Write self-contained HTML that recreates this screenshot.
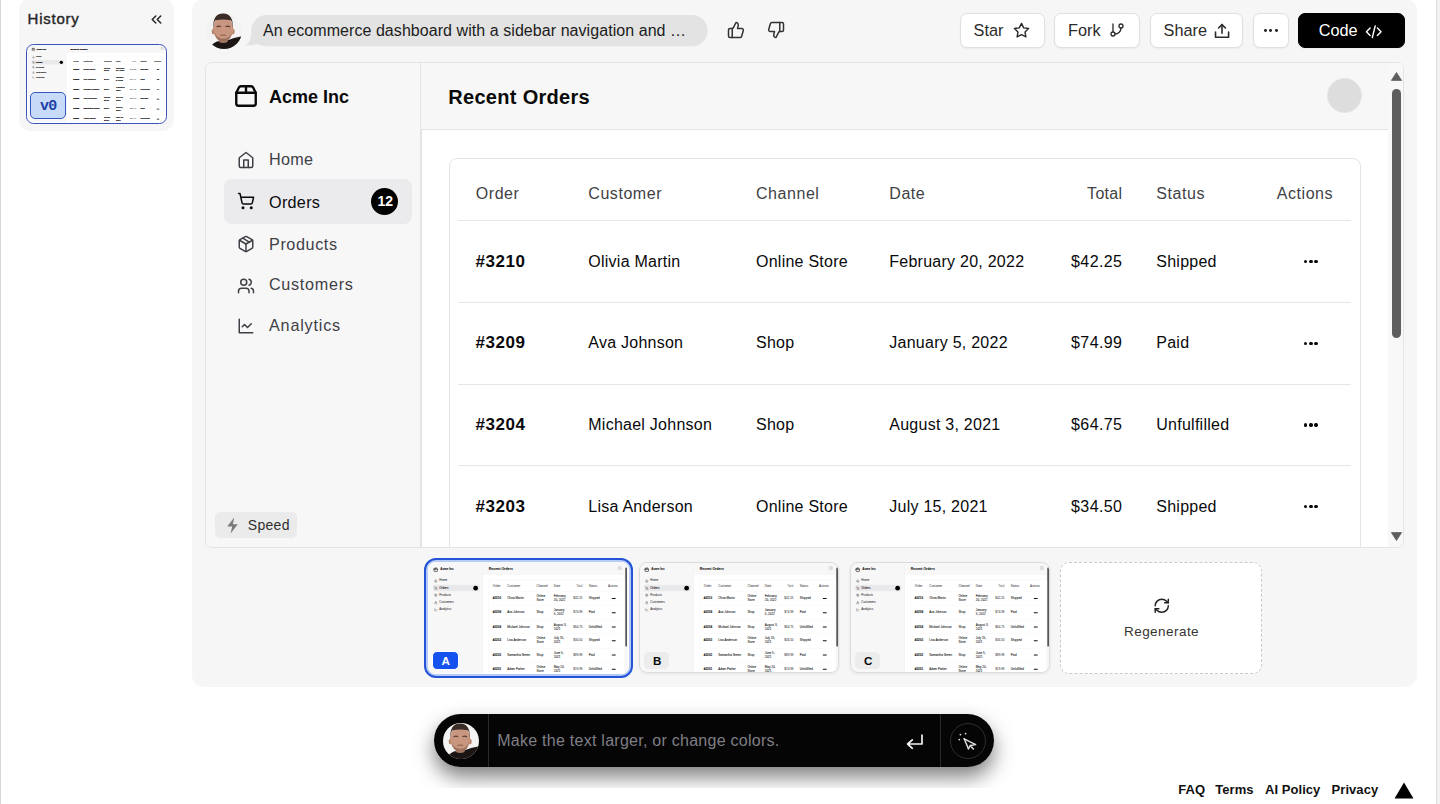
<!DOCTYPE html>
<html><head><meta charset="utf-8">
<style>
*{box-sizing:border-box;margin:0;padding:0}
html,body{width:1440px;height:804px;overflow:hidden;background:#fff;font-family:"Liberation Sans",sans-serif;color:#111}
.a{position:absolute}
.t{position:absolute;white-space:nowrap;line-height:1}
svg{overflow:visible}
</style></head>
<body>
<div class="a" style="left:0;top:0;width:1px;height:804px;background:#d6d6d6"></div>
<div class="a" style="left:1435.5px;top:0;width:4.5px;height:804px;background:#f2f2f2;border-left:1.7px solid #dedede"></div>
<div class="a" style="left:19.00px;top:-2.00px;width:155.00px;height:133.30px;background:#f6f6f6;border-radius:12px"></div>
<div class="t" style="left:27.60px;top:10.70px;font-size:15px;color:#262626;letter-spacing:0.75px;-webkit-text-stroke:0.4px #262626;">History</div>
<svg class="a" style="left:147.65px;top:11.10px;" width="17" height="17" viewBox="0 0 24 24" fill="none" stroke="#2a2a2a" stroke-width="2.2" stroke-linecap="round" stroke-linejoin="round"><path d="m11 17-5-5 5-5"/><path d="m18 17-5-5 5-5"/></svg>
<div class="a" style="left:26.30px;top:43.70px;width:140.50px;height:80.00px;border-radius:7px;background:#fff"></div>
<div class="a" style="left:27.8px;top:43.9px;width:137.5px;height:78.5px;overflow:hidden;border-radius:6px"><div class="a" style="left:0;top:0;width:800px;height:446px;transform:scale(0.175);transform-origin:0 0;background:#fff"><div class="a" style="left:0px;top:0px;width:220px;height:446px;background:#f7f7f8;border-right:1px solid #e6e6e6"></div><svg class="a" style="left:22.00px;top:22.00px;" width="18" height="18" viewBox="0 0 24 24" fill="none" stroke="#111" stroke-width="3" stroke-linecap="round" stroke-linejoin="round"><path d="M3 9h18v10a2 2 0 0 1-2 2H5a2 2 0 0 1-2-2V9Z"/><path d="m3 9 2.45-4.9A2 2 0 0 1 7.24 3h9.52a2 2 0 0 1 1.8 1.1L21 9"/><path d="M12 3v6"/></svg><div class="t" style="left:49px;top:23.2px;font-size:12px;font-weight:700;color:#111;-webkit-text-stroke:1.2px #111">Acme Inc</div><div class="a" style="left:20px;top:91px;width:186px;height:26px;background:#e9e9ec;border-radius:6px"></div><div class="a" style="left:180.5px;top:94.5px;width:19.5px;height:19.5px;background:#000;border-radius:50%"></div><svg class="a" style="left:25.00px;top:69.00px;" width="12" height="12" viewBox="0 0 24 24" fill="none" stroke="#555" stroke-width="2.5" stroke-linecap="round" stroke-linejoin="round"><path d="m3 9 9-7 9 7v11a2 2 0 0 1-2 2H5a2 2 0 0 1-2-2z"/><polyline points="9 22 9 12 15 12 15 22"/></svg><div class="t" style="left:45px;top:67.2px;font-size:12px;font-weight:400;color:#444;-webkit-text-stroke:1.2px #444">Home</div><svg class="a" style="left:25.00px;top:98.00px;" width="12" height="12" viewBox="0 0 24 24" fill="none" stroke="#555" stroke-width="2.5" stroke-linecap="round" stroke-linejoin="round"><circle cx="8" cy="21" r="1"/><circle cx="19" cy="21" r="1"/><path d="M2.05 2.05h2l2.66 12.42a2 2 0 0 0 2 1.58h9.78a2 2 0 0 0 1.95-1.57l1.65-7.43H5.12"/></svg><div class="t" style="left:45px;top:96.2px;font-size:12px;font-weight:400;color:#111;-webkit-text-stroke:1.2px #111">Orders</div><svg class="a" style="left:25.00px;top:127.00px;" width="12" height="12" viewBox="0 0 24 24" fill="none" stroke="#555" stroke-width="2.5" stroke-linecap="round" stroke-linejoin="round"><path d="m7.5 4.27 9 5.15"/><path d="M21 8a2 2 0 0 0-1-1.730l-7-4a2 2 0 0 0-2 0l-7 4A2 2 0 0 0 3 8v8a2 2 0 0 0 1 1.73l7 4a2 2 0 0 0 2 0l7-4A2 2 0 0 0 21 16Z"/><path d="m3.3 7 8.7 5 8.7-5"/><path d="M12 22V12"/></svg><div class="t" style="left:45px;top:125.2px;font-size:12px;font-weight:400;color:#444;-webkit-text-stroke:1.2px #444">Products</div><svg class="a" style="left:25.00px;top:157.00px;" width="12" height="12" viewBox="0 0 24 24" fill="none" stroke="#555" stroke-width="2.5" stroke-linecap="round" stroke-linejoin="round"><path d="M16 21v-2a4 4 0 0 0-4-4H6a4 4 0 0 0-4 4v2"/><circle cx="9" cy="7" r="4"/><path d="M22 21v-2a4 4 0 0 0-3-3.87"/><path d="M16 3.13a4 4 0 0 1 0 7.75"/></svg><div class="t" style="left:45px;top:155.2px;font-size:12px;font-weight:400;color:#444;-webkit-text-stroke:1.2px #444">Customers</div><svg class="a" style="left:25.00px;top:185.00px;" width="12" height="12" viewBox="0 0 24 24" fill="none" stroke="#555" stroke-width="2.5" stroke-linecap="round" stroke-linejoin="round"><path d="M3 3v18h18"/><path d="m19 9-5 5-4-4-3 3"/></svg><div class="t" style="left:45px;top:183.2px;font-size:12px;font-weight:400;color:#444;-webkit-text-stroke:1.2px #444">Analytics</div><div class="a" style="left:220px;top:0px;width:564px;height:49px;background:#f7f7f7;border-bottom:1px solid #e6e6e6"></div><div class="t" style="left:243px;top:20.4px;font-size:14px;font-weight:700;color:#111;-webkit-text-stroke:1.2px #111">Recent Orders</div><div class="a" style="left:758px;top:15px;width:18px;height:18px;background:#dedede;border-radius:50%"></div><div class="a" style="left:784px;top:0px;width:16px;height:446px;background:#f8f8f8"></div><div class="a" style="left:789px;top:22px;width:7px;height:316px;background:#555;border-radius:4px"></div><div class="a" style="left:243px;top:69px;width:545px;height:420px;border:1px solid #e6e6e6;border-radius:6px;background:#fff"></div><div class="t" style="left:259px;top:90.2px;font-size:12px;font-weight:400;color:#555;-webkit-text-stroke:1.2px #555">Order</div><div class="t" style="left:317px;top:90.2px;font-size:12px;font-weight:400;color:#555;-webkit-text-stroke:1.2px #555">Customer</div><div class="t" style="left:434px;top:90.2px;font-size:12px;font-weight:400;color:#555;-webkit-text-stroke:1.2px #555">Channel</div><div class="t" style="left:503px;top:90.2px;font-size:12px;font-weight:400;color:#555;-webkit-text-stroke:1.2px #555">Date</div><div class="t" style="right:182px;top:90px;font-size:12px;color:#555">Total</div><div class="t" style="left:643px;top:90.2px;font-size:12px;font-weight:400;color:#555;-webkit-text-stroke:1.2px #555">Status</div><div class="t" style="left:720px;top:90.2px;font-size:12px;font-weight:400;color:#555;-webkit-text-stroke:1.2px #555">Actions</div><div class="a" style="left:259px;top:117.5px;width:518px;height:1px;background:#ececec"></div><div class="t" style="left:259px;top:138.2px;font-size:12px;font-weight:700;color:#111;-webkit-text-stroke:1.2px #111">#3210</div><div class="t" style="left:317px;top:138.2px;font-size:12px;font-weight:400;color:#222;-webkit-text-stroke:1.2px #222">Olivia Martin</div><div class="t" style="left:434px;top:130.2px;font-size:12px;font-weight:400;color:#222;-webkit-text-stroke:1.2px #222">Online</div><div class="t" style="left:434px;top:146.2px;font-size:12px;font-weight:400;color:#222;-webkit-text-stroke:1.2px #222">Store</div><div class="t" style="left:503px;top:130.2px;font-size:12px;font-weight:400;color:#222;-webkit-text-stroke:1.2px #222">February</div><div class="t" style="left:503px;top:146.2px;font-size:12px;font-weight:400;color:#222;-webkit-text-stroke:1.2px #222">20, 2022</div><div class="t" style="right:182px;top:138px;font-size:12px;color:#111">$42.25</div><div class="t" style="left:643px;top:138.2px;font-size:12px;font-weight:400;color:#222;-webkit-text-stroke:1.2px #222">Shipped</div><div class="a" style="left:735px;top:144px;width:16px;height:4px;background:#111;border-radius:2px"></div><div class="a" style="left:259px;top:174.5px;width:518px;height:1px;background:#ececec"></div><div class="t" style="left:259px;top:195.2px;font-size:12px;font-weight:700;color:#111;-webkit-text-stroke:1.2px #111">#3209</div><div class="t" style="left:317px;top:195.2px;font-size:12px;font-weight:400;color:#222;-webkit-text-stroke:1.2px #222">Ava Johnson</div><div class="t" style="left:434px;top:195.2px;font-size:12px;font-weight:400;color:#222;-webkit-text-stroke:1.2px #222">Shop</div><div class="t" style="left:503px;top:187.2px;font-size:12px;font-weight:400;color:#222;-webkit-text-stroke:1.2px #222">January</div><div class="t" style="left:503px;top:203.2px;font-size:12px;font-weight:400;color:#222;-webkit-text-stroke:1.2px #222">5, 2022</div><div class="t" style="right:182px;top:195px;font-size:12px;color:#111">$74.99</div><div class="t" style="left:643px;top:195.2px;font-size:12px;font-weight:400;color:#222;-webkit-text-stroke:1.2px #222">Paid</div><div class="a" style="left:735px;top:201px;width:16px;height:4px;background:#111;border-radius:2px"></div><div class="a" style="left:259px;top:231.5px;width:518px;height:1px;background:#ececec"></div><div class="t" style="left:259px;top:252.2px;font-size:12px;font-weight:700;color:#111;-webkit-text-stroke:1.2px #111">#3204</div><div class="t" style="left:317px;top:252.2px;font-size:12px;font-weight:400;color:#222;-webkit-text-stroke:1.2px #222">Michael Johnson</div><div class="t" style="left:434px;top:252.2px;font-size:12px;font-weight:400;color:#222;-webkit-text-stroke:1.2px #222">Shop</div><div class="t" style="left:503px;top:244.2px;font-size:12px;font-weight:400;color:#222;-webkit-text-stroke:1.2px #222">August 3,</div><div class="t" style="left:503px;top:260.2px;font-size:12px;font-weight:400;color:#222;-webkit-text-stroke:1.2px #222">2021</div><div class="t" style="right:182px;top:252px;font-size:12px;color:#111">$64.75</div><div class="t" style="left:643px;top:252.2px;font-size:12px;font-weight:400;color:#222;-webkit-text-stroke:1.2px #222">Unfulfilled</div><div class="a" style="left:735px;top:258px;width:16px;height:4px;background:#111;border-radius:2px"></div><div class="a" style="left:259px;top:286.5px;width:518px;height:1px;background:#ececec"></div><div class="t" style="left:259px;top:307.2px;font-size:12px;font-weight:700;color:#111;-webkit-text-stroke:1.2px #111">#3203</div><div class="t" style="left:317px;top:307.2px;font-size:12px;font-weight:400;color:#222;-webkit-text-stroke:1.2px #222">Lisa Anderson</div><div class="t" style="left:434px;top:299.2px;font-size:12px;font-weight:400;color:#222;-webkit-text-stroke:1.2px #222">Online</div><div class="t" style="left:434px;top:315.2px;font-size:12px;font-weight:400;color:#222;-webkit-text-stroke:1.2px #222">Store</div><div class="t" style="left:503px;top:299.2px;font-size:12px;font-weight:400;color:#222;-webkit-text-stroke:1.2px #222">July 15,</div><div class="t" style="left:503px;top:315.2px;font-size:12px;font-weight:400;color:#222;-webkit-text-stroke:1.2px #222">2021</div><div class="t" style="right:182px;top:307px;font-size:12px;color:#111">$34.50</div><div class="t" style="left:643px;top:307.2px;font-size:12px;font-weight:400;color:#222;-webkit-text-stroke:1.2px #222">Shipped</div><div class="a" style="left:735px;top:313px;width:16px;height:4px;background:#111;border-radius:2px"></div><div class="a" style="left:259px;top:343.5px;width:518px;height:1px;background:#ececec"></div><div class="t" style="left:259px;top:364.2px;font-size:12px;font-weight:700;color:#111;-webkit-text-stroke:1.2px #111">#3202</div><div class="t" style="left:317px;top:364.2px;font-size:12px;font-weight:400;color:#222;-webkit-text-stroke:1.2px #222">Samantha Green</div><div class="t" style="left:434px;top:364.2px;font-size:12px;font-weight:400;color:#222;-webkit-text-stroke:1.2px #222">Shop</div><div class="t" style="left:503px;top:356.2px;font-size:12px;font-weight:400;color:#222;-webkit-text-stroke:1.2px #222">June 5,</div><div class="t" style="left:503px;top:372.2px;font-size:12px;font-weight:400;color:#222;-webkit-text-stroke:1.2px #222">2021</div><div class="t" style="right:182px;top:364px;font-size:12px;color:#111">$89.99</div><div class="t" style="left:643px;top:364.2px;font-size:12px;font-weight:400;color:#222;-webkit-text-stroke:1.2px #222">Paid</div><div class="a" style="left:735px;top:370px;width:16px;height:4px;background:#111;border-radius:2px"></div><div class="a" style="left:259px;top:400.5px;width:518px;height:1px;background:#ececec"></div><div class="t" style="left:259px;top:421.2px;font-size:12px;font-weight:700;color:#111;-webkit-text-stroke:1.2px #111">#3201</div><div class="t" style="left:317px;top:421.2px;font-size:12px;font-weight:400;color:#222;-webkit-text-stroke:1.2px #222">Adam Parker</div><div class="t" style="left:434px;top:413.2px;font-size:12px;font-weight:400;color:#222;-webkit-text-stroke:1.2px #222">Online</div><div class="t" style="left:434px;top:429.2px;font-size:12px;font-weight:400;color:#222;-webkit-text-stroke:1.2px #222">Store</div><div class="t" style="left:503px;top:413.2px;font-size:12px;font-weight:400;color:#222;-webkit-text-stroke:1.2px #222">May 20,</div><div class="t" style="left:503px;top:429.2px;font-size:12px;font-weight:400;color:#222;-webkit-text-stroke:1.2px #222">2021</div><div class="t" style="right:182px;top:421px;font-size:12px;color:#111">$19.99</div><div class="t" style="left:643px;top:421.2px;font-size:12px;font-weight:400;color:#222;-webkit-text-stroke:1.2px #222">Unfulfilled</div><div class="a" style="left:735px;top:427px;width:16px;height:4px;background:#111;border-radius:2px"></div></div></div>
<div class="a" style="left:26.20px;top:43.60px;width:140.70px;height:80.20px;border:1.7px solid #3a53b8;border-radius:7.5px"></div>
<div class="a" style="left:30.30px;top:92.10px;width:36.00px;height:26.80px;background:#c7dbf9;border:1.6px solid #3557c4;border-radius:5px"></div>
<div class="t" style="left:40px;top:98.5px;font-family:'Liberation Mono',monospace;font-size:15px;font-weight:700;color:#1d3fa8;letter-spacing:-0.8px">v0</div>
<div class="a" style="left:192.00px;top:-1.00px;width:1225.00px;height:688.00px;background:#f6f6f6;border-radius:12px"></div>
<svg class="a" style="left:205.5px;top:12.5px" width="36" height="36" viewBox="0 0 36 36"><defs><clipPath id="c2055"><circle cx="18" cy="18" r="18"/></clipPath></defs><g clip-path="url(#c2055)"><rect width="36" height="36" fill="#f3f3f3"/><path d="M4 37 L6 31.5 Q10 28 15 27.5 L21 27.5 Q28 24.5 35 23.5 L36 37Z" fill="#1b1614"/><path d="M12.5 24 L22 24 L21.5 29 Q17 31 13 29Z" fill="#a37560"/><ellipse cx="7.4" cy="18.5" rx="1.7" ry="2.8" fill="#b8826a"/><ellipse cx="27" cy="18.5" rx="1.7" ry="2.8" fill="#b8826a"/><ellipse cx="17.2" cy="15.8" rx="10" ry="12.8" fill="#c99780"/><path d="M7.2 16.5 Q6.5 0.3 17 0.6 Q27.5 0.3 27 16.5 Q26.5 8.5 24.8 7.2 Q17 5.6 9.5 7.2 Q7.7 8.5 7.2 16.5Z" fill="#3a2d27"/><path d="M10.6 13.8 Q12.8 12.6 15 13.6 M19.6 13.6 Q21.8 12.6 24 13.8" stroke="#5c4035" stroke-width="1.4" fill="none"/><path d="M8.6 19 Q9.5 28.4 17.2 28.6 Q25 28.4 25.8 19 Q24 25.5 17.2 25.8 Q10.4 25.5 8.6 19Z" fill="#8c6554" opacity=".75"/><path d="M14.2 22.4 Q17.2 21.6 20.2 22.4" stroke="#8a5a48" stroke-width="1" fill="none"/></g></svg>
<svg class="a" style="left:244px;top:15px" width="466" height="32" viewBox="0 0 466 32"><path d="M22.5 0 H448 A15.6 15.6 0 0 1 448 31.3 H22.5 C18 31.3 15.5 30 13.5 28.7 C10 30.5 5 30.8 1.5 30.3 C5 28 7 24 7.2 18 L7.2 15.6 A15.6 15.6 0 0 1 22.5 0Z" fill="#e3e3e3"/></svg>
<div class="t" style="left:263.10px;top:22.95px;font-size:16px;color:#1c1c1c;letter-spacing:0.06px;">An ecommerce dashboard with a sidebar navigation and …</div>
<svg class="a" style="left:726.60px;top:21.00px;" width="18" height="18" viewBox="0 0 24 24" fill="none" stroke="#333" stroke-width="2" stroke-linecap="round" stroke-linejoin="round"><path d="M7 10v12"/><path d="M15 5.88 14 10h5.83a2 2 0 0 1 1.92 2.56l-2.33 8A2 2 0 0 1 17.5 22H4a2 2 0 0 1-2-2v-8a2 2 0 0 1 2-2h2.76a2 2 0 0 0 1.79-1.11L12 2a3.13 3.13 0 0 1 3 3.88Z"/></svg>
<svg class="a" style="left:767.20px;top:21.20px;" width="18" height="18" viewBox="0 0 24 24" fill="none" stroke="#333" stroke-width="2" stroke-linecap="round" stroke-linejoin="round"><path d="M17 14V2"/><path d="M9 18.12 10 14H4.17a2 2 0 0 1-1.92-2.56l2.33-8A2 2 0 0 1 6.5 2H20a2 2 0 0 1 2 2v8a2 2 0 0 1-2 2h-2.76a2 2 0 0 0-1.79 1.11L12 22a3.13 3.13 0 0 1-3-3.88Z"/></svg>
<div class="a" style="left:959.50px;top:12.50px;width:85.00px;height:35.50px;background:#fff;border:1px solid #e0e0e0;border-radius:7px;box-shadow:0 1px 2px rgba(0,0,0,.05)"></div><div class="t" style="left:973.60px;top:22.30px;font-size:16.3px;color:#2b2b2b;">Star</div><svg class="a" style="left:1012.50px;top:21.80px;" width="17" height="17" viewBox="0 0 24 24" fill="none" stroke="#2b2b2b" stroke-width="2" stroke-linecap="round" stroke-linejoin="round"><polygon points="12 2 15.09 8.26 22 9.27 17 14.14 18.18 21.02 12 17.77 5.82 21.02 7 14.14 2 9.27 8.91 8.26 12 2"/></svg>
<div class="a" style="left:1053.50px;top:12.50px;width:86.50px;height:35.50px;background:#fff;border:1px solid #e0e0e0;border-radius:7px;box-shadow:0 1px 2px rgba(0,0,0,.05)"></div><div class="t" style="left:1068.00px;top:22.30px;font-size:16.3px;color:#2b2b2b;">Fork</div><svg class="a" style="left:1109.00px;top:22.30px;" width="16" height="16" viewBox="0 0 24 24" fill="none" stroke="#2b2b2b" stroke-width="2" stroke-linecap="round" stroke-linejoin="round"><line x1="6" x2="6" y1="3" y2="15"/><circle cx="18" cy="6" r="3"/><circle cx="6" cy="18" r="3"/><path d="M18 9a9 9 0 0 1-9 9"/></svg>
<div class="a" style="left:1149.50px;top:12.50px;width:93.50px;height:35.50px;background:#fff;border:1px solid #e0e0e0;border-radius:7px;box-shadow:0 1px 2px rgba(0,0,0,.05)"></div><div class="t" style="left:1163.60px;top:22.30px;font-size:16.3px;color:#2b2b2b;">Share</div>
<svg class="a" style="left:1214px;top:22.5px" width="16" height="16" viewBox="0 0 16 16" fill="none" stroke="#2b2b2b" stroke-width="1.6" stroke-linecap="round" stroke-linejoin="round"><path d="M1.5 9 V14.2 H14.6 V9"/><path d="M8 1.6 V10.2"/><path d="M4.6 5 L8 1.6 L11.4 5"/></svg>
<div class="a" style="left:1252.50px;top:12.50px;width:36.00px;height:35.50px;background:#fff;border:1px solid #e0e0e0;border-radius:7px;box-shadow:0 1px 2px rgba(0,0,0,.05)"></div>
<div class="a" style="left:1263.80px;top:28.90px;width:2.80px;height:2.80px;background:#222;border-radius:50%"></div>
<div class="a" style="left:1269.40px;top:28.90px;width:2.80px;height:2.80px;background:#222;border-radius:50%"></div>
<div class="a" style="left:1275.00px;top:28.90px;width:2.80px;height:2.80px;background:#222;border-radius:50%"></div>
<div class="a" style="left:1297.50px;top:12.50px;width:107.00px;height:35.50px;background:#000;border:1px solid #000;border-radius:7px;box-shadow:0 1px 2px rgba(0,0,0,.05)"></div><div class="t" style="left:1318.70px;top:22.30px;font-size:16.3px;color:#fff;">Code</div><svg class="a" style="left:1365.00px;top:22.50px;" width="17.5" height="17.5" viewBox="0 0 24 24" fill="none" stroke="#fff" stroke-width="2" stroke-linecap="round" stroke-linejoin="round"><path d="m7 7-5 5 5 5"/><path d="m17 7 5 5-5 5"/><path d="m14 4-4 16"/></svg>
<div class="a" style="left:205.2px;top:62px;width:1198.8px;height:486px;border:1px solid #e4e4e4;border-radius:7px;overflow:hidden;background:#fff"><div class="a" style="left:0.00px;top:0.00px;width:215.00px;height:484.00px;background:#f7f7f8"></div><div class="a" style="left:214.00px;top:0.00px;width:1.70px;height:484.00px;background:#e4e4e8"></div><div class="a" style="left:215.30px;top:0.00px;width:966.50px;height:66.00px;background:#f7f7f7"></div><div class="a" style="left:215.30px;top:65.70px;width:966.50px;height:1.00px;background:#e2e2e6"></div><div class="a" style="left:1181.80px;top:0.00px;width:15.00px;height:484.00px;background:#f8f8f8"></div><div class="a" style="left:1185.50px;top:25.80px;width:9.60px;height:249.00px;background:#5e5e5e;border-radius:5px"></div><svg class="a" style="left:1184.8px;top:8.5px" width="11" height="9" viewBox="0 0 11 9"><path d="M5.5 0.5 L10.6 8.4 L0.4 8.4Z" fill="#5e5e5e" stroke="#5e5e5e" stroke-width="0.8" stroke-linejoin="round"/></svg><svg class="a" style="left:1184.8px;top:468.5px" width="11" height="9" viewBox="0 0 11 9"><path d="M0.4 0.6 L10.6 0.6 L5.5 8.5Z" fill="#5e5e5e" stroke="#5e5e5e" stroke-width="0.8" stroke-linejoin="round"/></svg><div class="a" style="left:1120.80px;top:15.30px;width:35.00px;height:35.00px;background:#dddddd;border:1px solid #e6e6e6;border-radius:50%"></div><svg class="a" style="left:27.20px;top:20.20px;" width="26" height="26" viewBox="0 0 24 24" fill="none" stroke="#0a0a0a" stroke-width="2.2" stroke-linecap="round" stroke-linejoin="round"><path d="M3 9h18v10a2 2 0 0 1-2 2H5a2 2 0 0 1-2-2V9Z"/><path d="m3 9 2.45-4.9A2 2 0 0 1 7.24 3h9.52a2 2 0 0 1 1.8 1.1L21 9"/><path d="M12 3v6"/></svg><div class="t" style="left:62.80px;top:25.06px;font-size:18px;color:#0a0a0a;font-weight:700;">Acme Inc</div><div class="a" style="left:18.00px;top:116.30px;width:187.50px;height:44.50px;background:#ebebee;border-radius:8px"></div><svg class="a" style="left:31.30px;top:87.50px;" width="18" height="18" viewBox="0 0 24 24" fill="none" stroke="#3f3f46" stroke-width="2" stroke-linecap="round" stroke-linejoin="round"><path d="m3 9 9-7 9 7v11a2 2 0 0 1-2 2H5a2 2 0 0 1-2-2z"/><polyline points="9 22 9 12 15 12 15 22"/></svg><div class="t" style="left:62.80px;top:88.48px;font-size:16.2px;color:#3f3f46;letter-spacing:0.3px;">Home</div><svg class="a" style="left:31.30px;top:129.20px;" width="18" height="18" viewBox="0 0 24 24" fill="none" stroke="#09090b" stroke-width="2" stroke-linecap="round" stroke-linejoin="round"><circle cx="8" cy="21" r="1"/><circle cx="19" cy="21" r="1"/><path d="M2.05 2.05h2l2.66 12.42a2 2 0 0 0 2 1.58h9.78a2 2 0 0 0 1.95-1.57l1.65-7.43H5.12"/></svg><div class="t" style="left:62.80px;top:131.28px;font-size:16.2px;color:#09090b;letter-spacing:0.3px;">Orders</div><svg class="a" style="left:31.30px;top:172.40px;" width="18" height="18" viewBox="0 0 24 24" fill="none" stroke="#3f3f46" stroke-width="2" stroke-linecap="round" stroke-linejoin="round"><path d="m7.5 4.27 9 5.15"/><path d="M21 8a2 2 0 0 0-1-1.730l-7-4a2 2 0 0 0-2 0l-7 4A2 2 0 0 0 3 8v8a2 2 0 0 0 1 1.73l7 4a2 2 0 0 0 2 0l7-4A2 2 0 0 0 21 16Z"/><path d="m3.3 7 8.7 5 8.7-5"/><path d="M12 22V12"/></svg><div class="t" style="left:62.80px;top:173.28px;font-size:16.2px;color:#3f3f46;letter-spacing:0.6px;">Products</div><svg class="a" style="left:31.30px;top:213.50px;" width="18" height="18" viewBox="0 0 24 24" fill="none" stroke="#3f3f46" stroke-width="2" stroke-linecap="round" stroke-linejoin="round"><path d="M16 21v-2a4 4 0 0 0-4-4H6a4 4 0 0 0-4 4v2"/><circle cx="9" cy="7" r="4"/><path d="M22 21v-2a4 4 0 0 0-3-3.87"/><path d="M16 3.13a4 4 0 0 1 0 7.75"/></svg><div class="t" style="left:62.80px;top:213.48px;font-size:16.2px;color:#3f3f46;letter-spacing:0.7px;">Customers</div><svg class="a" style="left:31.30px;top:253.80px;" width="18" height="18" viewBox="0 0 24 24" fill="none" stroke="#3f3f46" stroke-width="2" stroke-linecap="round" stroke-linejoin="round"><path d="M3 3v18h18"/><path d="m19 9-5 5-4-4-3 3"/></svg><div class="t" style="left:62.80px;top:253.78px;font-size:16.2px;color:#3f3f46;letter-spacing:0.8px;">Analytics</div><div class="a" style="left:164.80px;top:125.00px;width:27.00px;height:27.00px;background:#000;border-radius:50%"></div><div class="t" style="left:171.30px;top:131.25px;font-size:14px;color:#fff;font-weight:700;">12</div><div class="a" style="left:9.20px;top:449.00px;width:82.00px;height:26.00px;background:#ebebeb;border-radius:5px"></div><svg class="a" style="left:20.30000000000001px;top:453.5px" width="13" height="17" viewBox="0 0 13 17"><path d="M8.2 0.5 L1.2 9.6 L6.2 9.6 L4.6 16.5 L11.8 7.2 L6.8 7.2Z" fill="#7a7a7a"/></svg><div class="t" style="left:41.60px;top:455.15px;font-size:14px;color:#2e2e2e;letter-spacing:0.3px;">Speed</div><div class="t" style="left:242.10px;top:23.87px;font-size:20px;color:#0a0a0a;font-weight:700;letter-spacing:0.3px;">Recent Orders</div><div class="a" style="left:242.80px;top:94.50px;width:912.00px;height:420.00px;border:1px solid #e4e4e7;border-radius:8px;background:#fff"></div><div class="t" style="left:269.60px;top:123.25px;font-size:16px;color:#3f3f46;letter-spacing:0.55px;">Order</div><div class="t" style="left:382.10px;top:123.25px;font-size:16px;color:#3f3f46;letter-spacing:0.55px;">Customer</div><div class="t" style="left:549.80px;top:123.25px;font-size:16px;color:#3f3f46;letter-spacing:0.55px;">Channel</div><div class="t" style="left:683.10px;top:123.25px;font-size:16px;color:#3f3f46;letter-spacing:0.55px;">Date</div><div class="t" style="left:950.10px;top:123.25px;font-size:16px;color:#3f3f46;letter-spacing:0.55px;">Status</div><div class="t" style="left:1070.60px;top:123.25px;font-size:16px;color:#3f3f46;letter-spacing:0.55px;">Actions</div><div class="t" style="right:280.60000000000014px;top:123.25px;font-size:16px;color:#3f3f46;letter-spacing:0.3px">Total</div><div class="a" style="left:251.80px;top:157.30px;width:893.00px;height:1.00px;background:#e6e6ea"></div><div class="a" style="left:251.80px;top:238.90px;width:893.00px;height:1.00px;background:#e6e6ea"></div><div class="a" style="left:251.80px;top:320.60px;width:893.00px;height:1.00px;background:#e6e6ea"></div><div class="a" style="left:251.80px;top:402.20px;width:893.00px;height:1.00px;background:#e6e6ea"></div><div class="a" style="left:251.80px;top:483.70px;width:893.00px;height:1.00px;background:#e6e6ea"></div><div class="t" style="left:269.40px;top:189.71px;font-size:17px;color:#09090b;font-weight:700;letter-spacing:0.5px;">#3210</div><div class="t" style="left:382.10px;top:190.55px;font-size:16px;color:#09090b;letter-spacing:0.25px;">Olivia Martin</div><div class="t" style="left:549.80px;top:190.55px;font-size:16px;color:#09090b;letter-spacing:0.25px;">Online Store</div><div class="t" style="left:683.10px;top:190.55px;font-size:16px;color:#09090b;letter-spacing:0.25px;">February 20, 2022</div><div class="t" style="right:280.60000000000014px;top:190.55px;font-size:16px;color:#09090b;letter-spacing:0.4px">$42.25</div><div class="t" style="left:950.10px;top:190.55px;font-size:16px;color:#09090b;letter-spacing:0.25px;">Shipped</div><div class="a" style="left:1097.85px;top:196.95px;width:3.30px;height:3.30px;background:#0a0a0a;border-radius:50%"></div><div class="a" style="left:1103.05px;top:196.95px;width:3.30px;height:3.30px;background:#0a0a0a;border-radius:50%"></div><div class="a" style="left:1108.25px;top:196.95px;width:3.30px;height:3.30px;background:#0a0a0a;border-radius:50%"></div><div class="t" style="left:269.40px;top:271.38px;font-size:17px;color:#09090b;font-weight:700;letter-spacing:0.5px;">#3209</div><div class="t" style="left:382.10px;top:272.22px;font-size:16px;color:#09090b;letter-spacing:0.25px;">Ava Johnson</div><div class="t" style="left:549.80px;top:272.22px;font-size:16px;color:#09090b;letter-spacing:0.25px;">Shop</div><div class="t" style="left:683.10px;top:272.22px;font-size:16px;color:#09090b;letter-spacing:0.25px;">January 5, 2022</div><div class="t" style="right:280.60000000000014px;top:272.22px;font-size:16px;color:#09090b;letter-spacing:0.4px">$74.99</div><div class="t" style="left:950.10px;top:272.22px;font-size:16px;color:#09090b;letter-spacing:0.25px;">Paid</div><div class="a" style="left:1097.85px;top:278.62px;width:3.30px;height:3.30px;background:#0a0a0a;border-radius:50%"></div><div class="a" style="left:1103.05px;top:278.62px;width:3.30px;height:3.30px;background:#0a0a0a;border-radius:50%"></div><div class="a" style="left:1108.25px;top:278.62px;width:3.30px;height:3.30px;background:#0a0a0a;border-radius:50%"></div><div class="t" style="left:269.40px;top:353.05px;font-size:17px;color:#09090b;font-weight:700;letter-spacing:0.5px;">#3204</div><div class="t" style="left:382.10px;top:353.89px;font-size:16px;color:#09090b;letter-spacing:0.25px;">Michael Johnson</div><div class="t" style="left:549.80px;top:353.89px;font-size:16px;color:#09090b;letter-spacing:0.25px;">Shop</div><div class="t" style="left:683.10px;top:353.89px;font-size:16px;color:#09090b;letter-spacing:0.25px;">August 3, 2021</div><div class="t" style="right:280.60000000000014px;top:353.89px;font-size:16px;color:#09090b;letter-spacing:0.4px">$64.75</div><div class="t" style="left:950.10px;top:353.89px;font-size:16px;color:#09090b;letter-spacing:0.25px;">Unfulfilled</div><div class="a" style="left:1097.85px;top:360.29px;width:3.30px;height:3.30px;background:#0a0a0a;border-radius:50%"></div><div class="a" style="left:1103.05px;top:360.29px;width:3.30px;height:3.30px;background:#0a0a0a;border-radius:50%"></div><div class="a" style="left:1108.25px;top:360.29px;width:3.30px;height:3.30px;background:#0a0a0a;border-radius:50%"></div><div class="t" style="left:269.40px;top:434.72px;font-size:17px;color:#09090b;font-weight:700;letter-spacing:0.5px;">#3203</div><div class="t" style="left:382.10px;top:435.56px;font-size:16px;color:#09090b;letter-spacing:0.25px;">Lisa Anderson</div><div class="t" style="left:549.80px;top:435.56px;font-size:16px;color:#09090b;letter-spacing:0.25px;">Online Store</div><div class="t" style="left:683.10px;top:435.56px;font-size:16px;color:#09090b;letter-spacing:0.25px;">July 15, 2021</div><div class="t" style="right:280.60000000000014px;top:435.56px;font-size:16px;color:#09090b;letter-spacing:0.4px">$34.50</div><div class="t" style="left:950.10px;top:435.56px;font-size:16px;color:#09090b;letter-spacing:0.25px;">Shipped</div><div class="a" style="left:1097.85px;top:441.96px;width:3.30px;height:3.30px;background:#0a0a0a;border-radius:50%"></div><div class="a" style="left:1103.05px;top:441.96px;width:3.30px;height:3.30px;background:#0a0a0a;border-radius:50%"></div><div class="a" style="left:1108.25px;top:441.96px;width:3.30px;height:3.30px;background:#0a0a0a;border-radius:50%"></div></div>
<div class="a" style="left:424.00px;top:558.20px;width:208.70px;height:119.60px;background:#b6ccf6;border:2.3px solid #2453d8;border-radius:12px"></div>
<div class="a" style="left:428.00px;top:562.20px;width:200.50px;height:111.60px;background:#fff;border-radius:8px"></div>
<div class="a" style="left:428.00px;top:562.30px;width:200.50px;height:111.50px;background:#fff;border-radius:8px;overflow:hidden"></div>
<div class="a" style="left:428px;top:562.3px;width:200.5px;height:111.5px;overflow:hidden;border-radius:8px"><div class="a" style="left:0;top:0;width:800px;height:446px;transform:scale(0.25);transform-origin:0 0;background:#fff"><div class="a" style="left:0px;top:0px;width:220px;height:446px;background:#f7f7f8;border-right:1px solid #e6e6e6"></div><svg class="a" style="left:22.00px;top:22.00px;" width="18" height="18" viewBox="0 0 24 24" fill="none" stroke="#111" stroke-width="3" stroke-linecap="round" stroke-linejoin="round"><path d="M3 9h18v10a2 2 0 0 1-2 2H5a2 2 0 0 1-2-2V9Z"/><path d="m3 9 2.45-4.9A2 2 0 0 1 7.24 3h9.52a2 2 0 0 1 1.8 1.1L21 9"/><path d="M12 3v6"/></svg><div class="t" style="left:49px;top:23.2px;font-size:12px;font-weight:700;color:#111;-webkit-text-stroke:0.25px #111">Acme Inc</div><div class="a" style="left:20px;top:91px;width:186px;height:26px;background:#e9e9ec;border-radius:6px"></div><div class="a" style="left:180.5px;top:94.5px;width:19.5px;height:19.5px;background:#000;border-radius:50%"></div><svg class="a" style="left:25.00px;top:69.00px;" width="12" height="12" viewBox="0 0 24 24" fill="none" stroke="#555" stroke-width="2.5" stroke-linecap="round" stroke-linejoin="round"><path d="m3 9 9-7 9 7v11a2 2 0 0 1-2 2H5a2 2 0 0 1-2-2z"/><polyline points="9 22 9 12 15 12 15 22"/></svg><div class="t" style="left:45px;top:67.2px;font-size:12px;font-weight:400;color:#444;-webkit-text-stroke:0.25px #444">Home</div><svg class="a" style="left:25.00px;top:98.00px;" width="12" height="12" viewBox="0 0 24 24" fill="none" stroke="#555" stroke-width="2.5" stroke-linecap="round" stroke-linejoin="round"><circle cx="8" cy="21" r="1"/><circle cx="19" cy="21" r="1"/><path d="M2.05 2.05h2l2.66 12.42a2 2 0 0 0 2 1.58h9.78a2 2 0 0 0 1.95-1.57l1.65-7.43H5.12"/></svg><div class="t" style="left:45px;top:96.2px;font-size:12px;font-weight:400;color:#111;-webkit-text-stroke:0.25px #111">Orders</div><svg class="a" style="left:25.00px;top:127.00px;" width="12" height="12" viewBox="0 0 24 24" fill="none" stroke="#555" stroke-width="2.5" stroke-linecap="round" stroke-linejoin="round"><path d="m7.5 4.27 9 5.15"/><path d="M21 8a2 2 0 0 0-1-1.730l-7-4a2 2 0 0 0-2 0l-7 4A2 2 0 0 0 3 8v8a2 2 0 0 0 1 1.73l7 4a2 2 0 0 0 2 0l7-4A2 2 0 0 0 21 16Z"/><path d="m3.3 7 8.7 5 8.7-5"/><path d="M12 22V12"/></svg><div class="t" style="left:45px;top:125.2px;font-size:12px;font-weight:400;color:#444;-webkit-text-stroke:0.25px #444">Products</div><svg class="a" style="left:25.00px;top:157.00px;" width="12" height="12" viewBox="0 0 24 24" fill="none" stroke="#555" stroke-width="2.5" stroke-linecap="round" stroke-linejoin="round"><path d="M16 21v-2a4 4 0 0 0-4-4H6a4 4 0 0 0-4 4v2"/><circle cx="9" cy="7" r="4"/><path d="M22 21v-2a4 4 0 0 0-3-3.87"/><path d="M16 3.13a4 4 0 0 1 0 7.75"/></svg><div class="t" style="left:45px;top:155.2px;font-size:12px;font-weight:400;color:#444;-webkit-text-stroke:0.25px #444">Customers</div><svg class="a" style="left:25.00px;top:185.00px;" width="12" height="12" viewBox="0 0 24 24" fill="none" stroke="#555" stroke-width="2.5" stroke-linecap="round" stroke-linejoin="round"><path d="M3 3v18h18"/><path d="m19 9-5 5-4-4-3 3"/></svg><div class="t" style="left:45px;top:183.2px;font-size:12px;font-weight:400;color:#444;-webkit-text-stroke:0.25px #444">Analytics</div><div class="a" style="left:220px;top:0px;width:564px;height:49px;background:#f7f7f7;border-bottom:1px solid #e6e6e6"></div><div class="t" style="left:243px;top:20.4px;font-size:14px;font-weight:700;color:#111;-webkit-text-stroke:0.25px #111">Recent Orders</div><div class="a" style="left:758px;top:15px;width:18px;height:18px;background:#dedede;border-radius:50%"></div><div class="a" style="left:784px;top:0px;width:16px;height:446px;background:#f8f8f8"></div><div class="a" style="left:789px;top:22px;width:7px;height:316px;background:#555;border-radius:4px"></div><div class="a" style="left:243px;top:69px;width:545px;height:420px;border:1px solid #e6e6e6;border-radius:6px;background:#fff"></div><div class="t" style="left:259px;top:90.2px;font-size:12px;font-weight:400;color:#555;-webkit-text-stroke:0.25px #555">Order</div><div class="t" style="left:317px;top:90.2px;font-size:12px;font-weight:400;color:#555;-webkit-text-stroke:0.25px #555">Customer</div><div class="t" style="left:434px;top:90.2px;font-size:12px;font-weight:400;color:#555;-webkit-text-stroke:0.25px #555">Channel</div><div class="t" style="left:503px;top:90.2px;font-size:12px;font-weight:400;color:#555;-webkit-text-stroke:0.25px #555">Date</div><div class="t" style="right:182px;top:90px;font-size:12px;color:#555">Total</div><div class="t" style="left:643px;top:90.2px;font-size:12px;font-weight:400;color:#555;-webkit-text-stroke:0.25px #555">Status</div><div class="t" style="left:720px;top:90.2px;font-size:12px;font-weight:400;color:#555;-webkit-text-stroke:0.25px #555">Actions</div><div class="a" style="left:259px;top:117.5px;width:518px;height:1px;background:#ececec"></div><div class="t" style="left:259px;top:138.2px;font-size:12px;font-weight:700;color:#111;-webkit-text-stroke:0.25px #111">#3210</div><div class="t" style="left:317px;top:138.2px;font-size:12px;font-weight:400;color:#222;-webkit-text-stroke:0.25px #222">Olivia Martin</div><div class="t" style="left:434px;top:130.2px;font-size:12px;font-weight:400;color:#222;-webkit-text-stroke:0.25px #222">Online</div><div class="t" style="left:434px;top:146.2px;font-size:12px;font-weight:400;color:#222;-webkit-text-stroke:0.25px #222">Store</div><div class="t" style="left:503px;top:130.2px;font-size:12px;font-weight:400;color:#222;-webkit-text-stroke:0.25px #222">February</div><div class="t" style="left:503px;top:146.2px;font-size:12px;font-weight:400;color:#222;-webkit-text-stroke:0.25px #222">20, 2022</div><div class="t" style="right:182px;top:138px;font-size:12px;color:#111">$42.25</div><div class="t" style="left:643px;top:138.2px;font-size:12px;font-weight:400;color:#222;-webkit-text-stroke:0.25px #222">Shipped</div><div class="a" style="left:735px;top:144px;width:16px;height:4px;background:#111;border-radius:2px"></div><div class="a" style="left:259px;top:174.5px;width:518px;height:1px;background:#ececec"></div><div class="t" style="left:259px;top:195.2px;font-size:12px;font-weight:700;color:#111;-webkit-text-stroke:0.25px #111">#3209</div><div class="t" style="left:317px;top:195.2px;font-size:12px;font-weight:400;color:#222;-webkit-text-stroke:0.25px #222">Ava Johnson</div><div class="t" style="left:434px;top:195.2px;font-size:12px;font-weight:400;color:#222;-webkit-text-stroke:0.25px #222">Shop</div><div class="t" style="left:503px;top:187.2px;font-size:12px;font-weight:400;color:#222;-webkit-text-stroke:0.25px #222">January</div><div class="t" style="left:503px;top:203.2px;font-size:12px;font-weight:400;color:#222;-webkit-text-stroke:0.25px #222">5, 2022</div><div class="t" style="right:182px;top:195px;font-size:12px;color:#111">$74.99</div><div class="t" style="left:643px;top:195.2px;font-size:12px;font-weight:400;color:#222;-webkit-text-stroke:0.25px #222">Paid</div><div class="a" style="left:735px;top:201px;width:16px;height:4px;background:#111;border-radius:2px"></div><div class="a" style="left:259px;top:231.5px;width:518px;height:1px;background:#ececec"></div><div class="t" style="left:259px;top:252.2px;font-size:12px;font-weight:700;color:#111;-webkit-text-stroke:0.25px #111">#3204</div><div class="t" style="left:317px;top:252.2px;font-size:12px;font-weight:400;color:#222;-webkit-text-stroke:0.25px #222">Michael Johnson</div><div class="t" style="left:434px;top:252.2px;font-size:12px;font-weight:400;color:#222;-webkit-text-stroke:0.25px #222">Shop</div><div class="t" style="left:503px;top:244.2px;font-size:12px;font-weight:400;color:#222;-webkit-text-stroke:0.25px #222">August 3,</div><div class="t" style="left:503px;top:260.2px;font-size:12px;font-weight:400;color:#222;-webkit-text-stroke:0.25px #222">2021</div><div class="t" style="right:182px;top:252px;font-size:12px;color:#111">$64.75</div><div class="t" style="left:643px;top:252.2px;font-size:12px;font-weight:400;color:#222;-webkit-text-stroke:0.25px #222">Unfulfilled</div><div class="a" style="left:735px;top:258px;width:16px;height:4px;background:#111;border-radius:2px"></div><div class="a" style="left:259px;top:286.5px;width:518px;height:1px;background:#ececec"></div><div class="t" style="left:259px;top:307.2px;font-size:12px;font-weight:700;color:#111;-webkit-text-stroke:0.25px #111">#3203</div><div class="t" style="left:317px;top:307.2px;font-size:12px;font-weight:400;color:#222;-webkit-text-stroke:0.25px #222">Lisa Anderson</div><div class="t" style="left:434px;top:299.2px;font-size:12px;font-weight:400;color:#222;-webkit-text-stroke:0.25px #222">Online</div><div class="t" style="left:434px;top:315.2px;font-size:12px;font-weight:400;color:#222;-webkit-text-stroke:0.25px #222">Store</div><div class="t" style="left:503px;top:299.2px;font-size:12px;font-weight:400;color:#222;-webkit-text-stroke:0.25px #222">July 15,</div><div class="t" style="left:503px;top:315.2px;font-size:12px;font-weight:400;color:#222;-webkit-text-stroke:0.25px #222">2021</div><div class="t" style="right:182px;top:307px;font-size:12px;color:#111">$34.50</div><div class="t" style="left:643px;top:307.2px;font-size:12px;font-weight:400;color:#222;-webkit-text-stroke:0.25px #222">Shipped</div><div class="a" style="left:735px;top:313px;width:16px;height:4px;background:#111;border-radius:2px"></div><div class="a" style="left:259px;top:343.5px;width:518px;height:1px;background:#ececec"></div><div class="t" style="left:259px;top:364.2px;font-size:12px;font-weight:700;color:#111;-webkit-text-stroke:0.25px #111">#3202</div><div class="t" style="left:317px;top:364.2px;font-size:12px;font-weight:400;color:#222;-webkit-text-stroke:0.25px #222">Samantha Green</div><div class="t" style="left:434px;top:364.2px;font-size:12px;font-weight:400;color:#222;-webkit-text-stroke:0.25px #222">Shop</div><div class="t" style="left:503px;top:356.2px;font-size:12px;font-weight:400;color:#222;-webkit-text-stroke:0.25px #222">June 5,</div><div class="t" style="left:503px;top:372.2px;font-size:12px;font-weight:400;color:#222;-webkit-text-stroke:0.25px #222">2021</div><div class="t" style="right:182px;top:364px;font-size:12px;color:#111">$89.99</div><div class="t" style="left:643px;top:364.2px;font-size:12px;font-weight:400;color:#222;-webkit-text-stroke:0.25px #222">Paid</div><div class="a" style="left:735px;top:370px;width:16px;height:4px;background:#111;border-radius:2px"></div><div class="a" style="left:259px;top:400.5px;width:518px;height:1px;background:#ececec"></div><div class="t" style="left:259px;top:421.2px;font-size:12px;font-weight:700;color:#111;-webkit-text-stroke:0.25px #111">#3201</div><div class="t" style="left:317px;top:421.2px;font-size:12px;font-weight:400;color:#222;-webkit-text-stroke:0.25px #222">Adam Parker</div><div class="t" style="left:434px;top:413.2px;font-size:12px;font-weight:400;color:#222;-webkit-text-stroke:0.25px #222">Online</div><div class="t" style="left:434px;top:429.2px;font-size:12px;font-weight:400;color:#222;-webkit-text-stroke:0.25px #222">Store</div><div class="t" style="left:503px;top:413.2px;font-size:12px;font-weight:400;color:#222;-webkit-text-stroke:0.25px #222">May 20,</div><div class="t" style="left:503px;top:429.2px;font-size:12px;font-weight:400;color:#222;-webkit-text-stroke:0.25px #222">2021</div><div class="t" style="right:182px;top:421px;font-size:12px;color:#111">$19.99</div><div class="t" style="left:643px;top:421.2px;font-size:12px;font-weight:400;color:#222;-webkit-text-stroke:0.25px #222">Unfulfilled</div><div class="a" style="left:735px;top:427px;width:16px;height:4px;background:#111;border-radius:2px"></div></div></div>
<div class="a" style="left:431.60px;top:651.10px;width:27.80px;height:18.70px;background:#1652ee;border:1px solid #fff;border-radius:5px"></div>
<div class="t" style="left:441.50px;top:655.18px;font-size:11.6px;color:#fff;font-weight:700;">A</div>
<div class="a" style="left:639.00px;top:562.30px;width:200.00px;height:111.00px;background:#fff;border-radius:8px;box-shadow:0 1px 3px rgba(0,0,0,.08)"></div>
<div class="a" style="left:639px;top:562.3px;width:200px;height:111px;overflow:hidden;border-radius:8px"><div class="a" style="left:0;top:0;width:800px;height:446px;transform:scale(0.25);transform-origin:0 0;background:#fff"><div class="a" style="left:0px;top:0px;width:220px;height:446px;background:#f7f7f8;border-right:1px solid #e6e6e6"></div><svg class="a" style="left:22.00px;top:22.00px;" width="18" height="18" viewBox="0 0 24 24" fill="none" stroke="#111" stroke-width="3" stroke-linecap="round" stroke-linejoin="round"><path d="M3 9h18v10a2 2 0 0 1-2 2H5a2 2 0 0 1-2-2V9Z"/><path d="m3 9 2.45-4.9A2 2 0 0 1 7.24 3h9.52a2 2 0 0 1 1.8 1.1L21 9"/><path d="M12 3v6"/></svg><div class="t" style="left:49px;top:23.2px;font-size:12px;font-weight:700;color:#111;-webkit-text-stroke:0.25px #111">Acme Inc</div><div class="a" style="left:20px;top:91px;width:186px;height:26px;background:#e9e9ec;border-radius:6px"></div><div class="a" style="left:180.5px;top:94.5px;width:19.5px;height:19.5px;background:#000;border-radius:50%"></div><svg class="a" style="left:25.00px;top:69.00px;" width="12" height="12" viewBox="0 0 24 24" fill="none" stroke="#555" stroke-width="2.5" stroke-linecap="round" stroke-linejoin="round"><path d="m3 9 9-7 9 7v11a2 2 0 0 1-2 2H5a2 2 0 0 1-2-2z"/><polyline points="9 22 9 12 15 12 15 22"/></svg><div class="t" style="left:45px;top:67.2px;font-size:12px;font-weight:400;color:#444;-webkit-text-stroke:0.25px #444">Home</div><svg class="a" style="left:25.00px;top:98.00px;" width="12" height="12" viewBox="0 0 24 24" fill="none" stroke="#555" stroke-width="2.5" stroke-linecap="round" stroke-linejoin="round"><circle cx="8" cy="21" r="1"/><circle cx="19" cy="21" r="1"/><path d="M2.05 2.05h2l2.66 12.42a2 2 0 0 0 2 1.58h9.78a2 2 0 0 0 1.95-1.57l1.65-7.43H5.12"/></svg><div class="t" style="left:45px;top:96.2px;font-size:12px;font-weight:400;color:#111;-webkit-text-stroke:0.25px #111">Orders</div><svg class="a" style="left:25.00px;top:127.00px;" width="12" height="12" viewBox="0 0 24 24" fill="none" stroke="#555" stroke-width="2.5" stroke-linecap="round" stroke-linejoin="round"><path d="m7.5 4.27 9 5.15"/><path d="M21 8a2 2 0 0 0-1-1.730l-7-4a2 2 0 0 0-2 0l-7 4A2 2 0 0 0 3 8v8a2 2 0 0 0 1 1.73l7 4a2 2 0 0 0 2 0l7-4A2 2 0 0 0 21 16Z"/><path d="m3.3 7 8.7 5 8.7-5"/><path d="M12 22V12"/></svg><div class="t" style="left:45px;top:125.2px;font-size:12px;font-weight:400;color:#444;-webkit-text-stroke:0.25px #444">Products</div><svg class="a" style="left:25.00px;top:157.00px;" width="12" height="12" viewBox="0 0 24 24" fill="none" stroke="#555" stroke-width="2.5" stroke-linecap="round" stroke-linejoin="round"><path d="M16 21v-2a4 4 0 0 0-4-4H6a4 4 0 0 0-4 4v2"/><circle cx="9" cy="7" r="4"/><path d="M22 21v-2a4 4 0 0 0-3-3.87"/><path d="M16 3.13a4 4 0 0 1 0 7.75"/></svg><div class="t" style="left:45px;top:155.2px;font-size:12px;font-weight:400;color:#444;-webkit-text-stroke:0.25px #444">Customers</div><svg class="a" style="left:25.00px;top:185.00px;" width="12" height="12" viewBox="0 0 24 24" fill="none" stroke="#555" stroke-width="2.5" stroke-linecap="round" stroke-linejoin="round"><path d="M3 3v18h18"/><path d="m19 9-5 5-4-4-3 3"/></svg><div class="t" style="left:45px;top:183.2px;font-size:12px;font-weight:400;color:#444;-webkit-text-stroke:0.25px #444">Analytics</div><div class="a" style="left:220px;top:0px;width:564px;height:49px;background:#f7f7f7;border-bottom:1px solid #e6e6e6"></div><div class="t" style="left:243px;top:20.4px;font-size:14px;font-weight:700;color:#111;-webkit-text-stroke:0.25px #111">Recent Orders</div><div class="a" style="left:758px;top:15px;width:18px;height:18px;background:#dedede;border-radius:50%"></div><div class="a" style="left:784px;top:0px;width:16px;height:446px;background:#f8f8f8"></div><div class="a" style="left:789px;top:22px;width:7px;height:316px;background:#555;border-radius:4px"></div><div class="a" style="left:243px;top:69px;width:545px;height:420px;border:1px solid #e6e6e6;border-radius:6px;background:#fff"></div><div class="t" style="left:259px;top:90.2px;font-size:12px;font-weight:400;color:#555;-webkit-text-stroke:0.25px #555">Order</div><div class="t" style="left:317px;top:90.2px;font-size:12px;font-weight:400;color:#555;-webkit-text-stroke:0.25px #555">Customer</div><div class="t" style="left:434px;top:90.2px;font-size:12px;font-weight:400;color:#555;-webkit-text-stroke:0.25px #555">Channel</div><div class="t" style="left:503px;top:90.2px;font-size:12px;font-weight:400;color:#555;-webkit-text-stroke:0.25px #555">Date</div><div class="t" style="right:182px;top:90px;font-size:12px;color:#555">Total</div><div class="t" style="left:643px;top:90.2px;font-size:12px;font-weight:400;color:#555;-webkit-text-stroke:0.25px #555">Status</div><div class="t" style="left:720px;top:90.2px;font-size:12px;font-weight:400;color:#555;-webkit-text-stroke:0.25px #555">Actions</div><div class="a" style="left:259px;top:117.5px;width:518px;height:1px;background:#ececec"></div><div class="t" style="left:259px;top:138.2px;font-size:12px;font-weight:700;color:#111;-webkit-text-stroke:0.25px #111">#3210</div><div class="t" style="left:317px;top:138.2px;font-size:12px;font-weight:400;color:#222;-webkit-text-stroke:0.25px #222">Olivia Martin</div><div class="t" style="left:434px;top:130.2px;font-size:12px;font-weight:400;color:#222;-webkit-text-stroke:0.25px #222">Online</div><div class="t" style="left:434px;top:146.2px;font-size:12px;font-weight:400;color:#222;-webkit-text-stroke:0.25px #222">Store</div><div class="t" style="left:503px;top:130.2px;font-size:12px;font-weight:400;color:#222;-webkit-text-stroke:0.25px #222">February</div><div class="t" style="left:503px;top:146.2px;font-size:12px;font-weight:400;color:#222;-webkit-text-stroke:0.25px #222">20, 2022</div><div class="t" style="right:182px;top:138px;font-size:12px;color:#111">$42.25</div><div class="t" style="left:643px;top:138.2px;font-size:12px;font-weight:400;color:#222;-webkit-text-stroke:0.25px #222">Shipped</div><div class="a" style="left:735px;top:144px;width:16px;height:4px;background:#111;border-radius:2px"></div><div class="a" style="left:259px;top:174.5px;width:518px;height:1px;background:#ececec"></div><div class="t" style="left:259px;top:195.2px;font-size:12px;font-weight:700;color:#111;-webkit-text-stroke:0.25px #111">#3209</div><div class="t" style="left:317px;top:195.2px;font-size:12px;font-weight:400;color:#222;-webkit-text-stroke:0.25px #222">Ava Johnson</div><div class="t" style="left:434px;top:195.2px;font-size:12px;font-weight:400;color:#222;-webkit-text-stroke:0.25px #222">Shop</div><div class="t" style="left:503px;top:187.2px;font-size:12px;font-weight:400;color:#222;-webkit-text-stroke:0.25px #222">January</div><div class="t" style="left:503px;top:203.2px;font-size:12px;font-weight:400;color:#222;-webkit-text-stroke:0.25px #222">5, 2022</div><div class="t" style="right:182px;top:195px;font-size:12px;color:#111">$74.99</div><div class="t" style="left:643px;top:195.2px;font-size:12px;font-weight:400;color:#222;-webkit-text-stroke:0.25px #222">Paid</div><div class="a" style="left:735px;top:201px;width:16px;height:4px;background:#111;border-radius:2px"></div><div class="a" style="left:259px;top:231.5px;width:518px;height:1px;background:#ececec"></div><div class="t" style="left:259px;top:252.2px;font-size:12px;font-weight:700;color:#111;-webkit-text-stroke:0.25px #111">#3204</div><div class="t" style="left:317px;top:252.2px;font-size:12px;font-weight:400;color:#222;-webkit-text-stroke:0.25px #222">Michael Johnson</div><div class="t" style="left:434px;top:252.2px;font-size:12px;font-weight:400;color:#222;-webkit-text-stroke:0.25px #222">Shop</div><div class="t" style="left:503px;top:244.2px;font-size:12px;font-weight:400;color:#222;-webkit-text-stroke:0.25px #222">August 3,</div><div class="t" style="left:503px;top:260.2px;font-size:12px;font-weight:400;color:#222;-webkit-text-stroke:0.25px #222">2021</div><div class="t" style="right:182px;top:252px;font-size:12px;color:#111">$64.75</div><div class="t" style="left:643px;top:252.2px;font-size:12px;font-weight:400;color:#222;-webkit-text-stroke:0.25px #222">Unfulfilled</div><div class="a" style="left:735px;top:258px;width:16px;height:4px;background:#111;border-radius:2px"></div><div class="a" style="left:259px;top:286.5px;width:518px;height:1px;background:#ececec"></div><div class="t" style="left:259px;top:307.2px;font-size:12px;font-weight:700;color:#111;-webkit-text-stroke:0.25px #111">#3203</div><div class="t" style="left:317px;top:307.2px;font-size:12px;font-weight:400;color:#222;-webkit-text-stroke:0.25px #222">Lisa Anderson</div><div class="t" style="left:434px;top:299.2px;font-size:12px;font-weight:400;color:#222;-webkit-text-stroke:0.25px #222">Online</div><div class="t" style="left:434px;top:315.2px;font-size:12px;font-weight:400;color:#222;-webkit-text-stroke:0.25px #222">Store</div><div class="t" style="left:503px;top:299.2px;font-size:12px;font-weight:400;color:#222;-webkit-text-stroke:0.25px #222">July 15,</div><div class="t" style="left:503px;top:315.2px;font-size:12px;font-weight:400;color:#222;-webkit-text-stroke:0.25px #222">2021</div><div class="t" style="right:182px;top:307px;font-size:12px;color:#111">$34.50</div><div class="t" style="left:643px;top:307.2px;font-size:12px;font-weight:400;color:#222;-webkit-text-stroke:0.25px #222">Shipped</div><div class="a" style="left:735px;top:313px;width:16px;height:4px;background:#111;border-radius:2px"></div><div class="a" style="left:259px;top:343.5px;width:518px;height:1px;background:#ececec"></div><div class="t" style="left:259px;top:364.2px;font-size:12px;font-weight:700;color:#111;-webkit-text-stroke:0.25px #111">#3202</div><div class="t" style="left:317px;top:364.2px;font-size:12px;font-weight:400;color:#222;-webkit-text-stroke:0.25px #222">Samantha Green</div><div class="t" style="left:434px;top:364.2px;font-size:12px;font-weight:400;color:#222;-webkit-text-stroke:0.25px #222">Shop</div><div class="t" style="left:503px;top:356.2px;font-size:12px;font-weight:400;color:#222;-webkit-text-stroke:0.25px #222">June 5,</div><div class="t" style="left:503px;top:372.2px;font-size:12px;font-weight:400;color:#222;-webkit-text-stroke:0.25px #222">2021</div><div class="t" style="right:182px;top:364px;font-size:12px;color:#111">$89.99</div><div class="t" style="left:643px;top:364.2px;font-size:12px;font-weight:400;color:#222;-webkit-text-stroke:0.25px #222">Paid</div><div class="a" style="left:735px;top:370px;width:16px;height:4px;background:#111;border-radius:2px"></div><div class="a" style="left:259px;top:400.5px;width:518px;height:1px;background:#ececec"></div><div class="t" style="left:259px;top:421.2px;font-size:12px;font-weight:700;color:#111;-webkit-text-stroke:0.25px #111">#3201</div><div class="t" style="left:317px;top:421.2px;font-size:12px;font-weight:400;color:#222;-webkit-text-stroke:0.25px #222">Adam Parker</div><div class="t" style="left:434px;top:413.2px;font-size:12px;font-weight:400;color:#222;-webkit-text-stroke:0.25px #222">Online</div><div class="t" style="left:434px;top:429.2px;font-size:12px;font-weight:400;color:#222;-webkit-text-stroke:0.25px #222">Store</div><div class="t" style="left:503px;top:413.2px;font-size:12px;font-weight:400;color:#222;-webkit-text-stroke:0.25px #222">May 20,</div><div class="t" style="left:503px;top:429.2px;font-size:12px;font-weight:400;color:#222;-webkit-text-stroke:0.25px #222">2021</div><div class="t" style="right:182px;top:421px;font-size:12px;color:#111">$19.99</div><div class="t" style="left:643px;top:421.2px;font-size:12px;font-weight:400;color:#222;-webkit-text-stroke:0.25px #222">Unfulfilled</div><div class="a" style="left:735px;top:427px;width:16px;height:4px;background:#111;border-radius:2px"></div></div></div>
<div class="a" style="left:639.00px;top:562.30px;width:200.00px;height:111.00px;border:1px solid #dcdcdc;border-radius:8px"></div>
<div class="a" style="left:643.60px;top:651.90px;width:25.80px;height:16.80px;background:#ececec;border-radius:4.5px"></div>
<div class="t" style="left:652.90px;top:655.08px;font-size:11.6px;color:#0a0a0a;font-weight:700;">B</div>
<div class="a" style="left:850.00px;top:562.30px;width:200.00px;height:111.00px;background:#fff;border-radius:8px;box-shadow:0 1px 3px rgba(0,0,0,.08)"></div>
<div class="a" style="left:850px;top:562.3px;width:200px;height:111px;overflow:hidden;border-radius:8px"><div class="a" style="left:0;top:0;width:800px;height:446px;transform:scale(0.25);transform-origin:0 0;background:#fff"><div class="a" style="left:0px;top:0px;width:220px;height:446px;background:#f7f7f8;border-right:1px solid #e6e6e6"></div><svg class="a" style="left:22.00px;top:22.00px;" width="18" height="18" viewBox="0 0 24 24" fill="none" stroke="#111" stroke-width="3" stroke-linecap="round" stroke-linejoin="round"><path d="M3 9h18v10a2 2 0 0 1-2 2H5a2 2 0 0 1-2-2V9Z"/><path d="m3 9 2.45-4.9A2 2 0 0 1 7.24 3h9.52a2 2 0 0 1 1.8 1.1L21 9"/><path d="M12 3v6"/></svg><div class="t" style="left:49px;top:23.2px;font-size:12px;font-weight:700;color:#111;-webkit-text-stroke:0.25px #111">Acme Inc</div><div class="a" style="left:20px;top:91px;width:186px;height:26px;background:#e9e9ec;border-radius:6px"></div><div class="a" style="left:180.5px;top:94.5px;width:19.5px;height:19.5px;background:#000;border-radius:50%"></div><svg class="a" style="left:25.00px;top:69.00px;" width="12" height="12" viewBox="0 0 24 24" fill="none" stroke="#555" stroke-width="2.5" stroke-linecap="round" stroke-linejoin="round"><path d="m3 9 9-7 9 7v11a2 2 0 0 1-2 2H5a2 2 0 0 1-2-2z"/><polyline points="9 22 9 12 15 12 15 22"/></svg><div class="t" style="left:45px;top:67.2px;font-size:12px;font-weight:400;color:#444;-webkit-text-stroke:0.25px #444">Home</div><svg class="a" style="left:25.00px;top:98.00px;" width="12" height="12" viewBox="0 0 24 24" fill="none" stroke="#555" stroke-width="2.5" stroke-linecap="round" stroke-linejoin="round"><circle cx="8" cy="21" r="1"/><circle cx="19" cy="21" r="1"/><path d="M2.05 2.05h2l2.66 12.42a2 2 0 0 0 2 1.58h9.78a2 2 0 0 0 1.95-1.57l1.65-7.43H5.12"/></svg><div class="t" style="left:45px;top:96.2px;font-size:12px;font-weight:400;color:#111;-webkit-text-stroke:0.25px #111">Orders</div><svg class="a" style="left:25.00px;top:127.00px;" width="12" height="12" viewBox="0 0 24 24" fill="none" stroke="#555" stroke-width="2.5" stroke-linecap="round" stroke-linejoin="round"><path d="m7.5 4.27 9 5.15"/><path d="M21 8a2 2 0 0 0-1-1.730l-7-4a2 2 0 0 0-2 0l-7 4A2 2 0 0 0 3 8v8a2 2 0 0 0 1 1.73l7 4a2 2 0 0 0 2 0l7-4A2 2 0 0 0 21 16Z"/><path d="m3.3 7 8.7 5 8.7-5"/><path d="M12 22V12"/></svg><div class="t" style="left:45px;top:125.2px;font-size:12px;font-weight:400;color:#444;-webkit-text-stroke:0.25px #444">Products</div><svg class="a" style="left:25.00px;top:157.00px;" width="12" height="12" viewBox="0 0 24 24" fill="none" stroke="#555" stroke-width="2.5" stroke-linecap="round" stroke-linejoin="round"><path d="M16 21v-2a4 4 0 0 0-4-4H6a4 4 0 0 0-4 4v2"/><circle cx="9" cy="7" r="4"/><path d="M22 21v-2a4 4 0 0 0-3-3.87"/><path d="M16 3.13a4 4 0 0 1 0 7.75"/></svg><div class="t" style="left:45px;top:155.2px;font-size:12px;font-weight:400;color:#444;-webkit-text-stroke:0.25px #444">Customers</div><svg class="a" style="left:25.00px;top:185.00px;" width="12" height="12" viewBox="0 0 24 24" fill="none" stroke="#555" stroke-width="2.5" stroke-linecap="round" stroke-linejoin="round"><path d="M3 3v18h18"/><path d="m19 9-5 5-4-4-3 3"/></svg><div class="t" style="left:45px;top:183.2px;font-size:12px;font-weight:400;color:#444;-webkit-text-stroke:0.25px #444">Analytics</div><div class="a" style="left:220px;top:0px;width:564px;height:49px;background:#f7f7f7;border-bottom:1px solid #e6e6e6"></div><div class="t" style="left:243px;top:20.4px;font-size:14px;font-weight:700;color:#111;-webkit-text-stroke:0.25px #111">Recent Orders</div><div class="a" style="left:758px;top:15px;width:18px;height:18px;background:#dedede;border-radius:50%"></div><div class="a" style="left:784px;top:0px;width:16px;height:446px;background:#f8f8f8"></div><div class="a" style="left:789px;top:22px;width:7px;height:316px;background:#555;border-radius:4px"></div><div class="a" style="left:243px;top:69px;width:545px;height:420px;border:1px solid #e6e6e6;border-radius:6px;background:#fff"></div><div class="t" style="left:259px;top:90.2px;font-size:12px;font-weight:400;color:#555;-webkit-text-stroke:0.25px #555">Order</div><div class="t" style="left:317px;top:90.2px;font-size:12px;font-weight:400;color:#555;-webkit-text-stroke:0.25px #555">Customer</div><div class="t" style="left:434px;top:90.2px;font-size:12px;font-weight:400;color:#555;-webkit-text-stroke:0.25px #555">Channel</div><div class="t" style="left:503px;top:90.2px;font-size:12px;font-weight:400;color:#555;-webkit-text-stroke:0.25px #555">Date</div><div class="t" style="right:182px;top:90px;font-size:12px;color:#555">Total</div><div class="t" style="left:643px;top:90.2px;font-size:12px;font-weight:400;color:#555;-webkit-text-stroke:0.25px #555">Status</div><div class="t" style="left:720px;top:90.2px;font-size:12px;font-weight:400;color:#555;-webkit-text-stroke:0.25px #555">Actions</div><div class="a" style="left:259px;top:117.5px;width:518px;height:1px;background:#ececec"></div><div class="t" style="left:259px;top:138.2px;font-size:12px;font-weight:700;color:#111;-webkit-text-stroke:0.25px #111">#3210</div><div class="t" style="left:317px;top:138.2px;font-size:12px;font-weight:400;color:#222;-webkit-text-stroke:0.25px #222">Olivia Martin</div><div class="t" style="left:434px;top:130.2px;font-size:12px;font-weight:400;color:#222;-webkit-text-stroke:0.25px #222">Online</div><div class="t" style="left:434px;top:146.2px;font-size:12px;font-weight:400;color:#222;-webkit-text-stroke:0.25px #222">Store</div><div class="t" style="left:503px;top:130.2px;font-size:12px;font-weight:400;color:#222;-webkit-text-stroke:0.25px #222">February</div><div class="t" style="left:503px;top:146.2px;font-size:12px;font-weight:400;color:#222;-webkit-text-stroke:0.25px #222">20, 2022</div><div class="t" style="right:182px;top:138px;font-size:12px;color:#111">$42.25</div><div class="t" style="left:643px;top:138.2px;font-size:12px;font-weight:400;color:#222;-webkit-text-stroke:0.25px #222">Shipped</div><div class="a" style="left:735px;top:144px;width:16px;height:4px;background:#111;border-radius:2px"></div><div class="a" style="left:259px;top:174.5px;width:518px;height:1px;background:#ececec"></div><div class="t" style="left:259px;top:195.2px;font-size:12px;font-weight:700;color:#111;-webkit-text-stroke:0.25px #111">#3209</div><div class="t" style="left:317px;top:195.2px;font-size:12px;font-weight:400;color:#222;-webkit-text-stroke:0.25px #222">Ava Johnson</div><div class="t" style="left:434px;top:195.2px;font-size:12px;font-weight:400;color:#222;-webkit-text-stroke:0.25px #222">Shop</div><div class="t" style="left:503px;top:187.2px;font-size:12px;font-weight:400;color:#222;-webkit-text-stroke:0.25px #222">January</div><div class="t" style="left:503px;top:203.2px;font-size:12px;font-weight:400;color:#222;-webkit-text-stroke:0.25px #222">5, 2022</div><div class="t" style="right:182px;top:195px;font-size:12px;color:#111">$74.99</div><div class="t" style="left:643px;top:195.2px;font-size:12px;font-weight:400;color:#222;-webkit-text-stroke:0.25px #222">Paid</div><div class="a" style="left:735px;top:201px;width:16px;height:4px;background:#111;border-radius:2px"></div><div class="a" style="left:259px;top:231.5px;width:518px;height:1px;background:#ececec"></div><div class="t" style="left:259px;top:252.2px;font-size:12px;font-weight:700;color:#111;-webkit-text-stroke:0.25px #111">#3204</div><div class="t" style="left:317px;top:252.2px;font-size:12px;font-weight:400;color:#222;-webkit-text-stroke:0.25px #222">Michael Johnson</div><div class="t" style="left:434px;top:252.2px;font-size:12px;font-weight:400;color:#222;-webkit-text-stroke:0.25px #222">Shop</div><div class="t" style="left:503px;top:244.2px;font-size:12px;font-weight:400;color:#222;-webkit-text-stroke:0.25px #222">August 3,</div><div class="t" style="left:503px;top:260.2px;font-size:12px;font-weight:400;color:#222;-webkit-text-stroke:0.25px #222">2021</div><div class="t" style="right:182px;top:252px;font-size:12px;color:#111">$64.75</div><div class="t" style="left:643px;top:252.2px;font-size:12px;font-weight:400;color:#222;-webkit-text-stroke:0.25px #222">Unfulfilled</div><div class="a" style="left:735px;top:258px;width:16px;height:4px;background:#111;border-radius:2px"></div><div class="a" style="left:259px;top:286.5px;width:518px;height:1px;background:#ececec"></div><div class="t" style="left:259px;top:307.2px;font-size:12px;font-weight:700;color:#111;-webkit-text-stroke:0.25px #111">#3203</div><div class="t" style="left:317px;top:307.2px;font-size:12px;font-weight:400;color:#222;-webkit-text-stroke:0.25px #222">Lisa Anderson</div><div class="t" style="left:434px;top:299.2px;font-size:12px;font-weight:400;color:#222;-webkit-text-stroke:0.25px #222">Online</div><div class="t" style="left:434px;top:315.2px;font-size:12px;font-weight:400;color:#222;-webkit-text-stroke:0.25px #222">Store</div><div class="t" style="left:503px;top:299.2px;font-size:12px;font-weight:400;color:#222;-webkit-text-stroke:0.25px #222">July 15,</div><div class="t" style="left:503px;top:315.2px;font-size:12px;font-weight:400;color:#222;-webkit-text-stroke:0.25px #222">2021</div><div class="t" style="right:182px;top:307px;font-size:12px;color:#111">$34.50</div><div class="t" style="left:643px;top:307.2px;font-size:12px;font-weight:400;color:#222;-webkit-text-stroke:0.25px #222">Shipped</div><div class="a" style="left:735px;top:313px;width:16px;height:4px;background:#111;border-radius:2px"></div><div class="a" style="left:259px;top:343.5px;width:518px;height:1px;background:#ececec"></div><div class="t" style="left:259px;top:364.2px;font-size:12px;font-weight:700;color:#111;-webkit-text-stroke:0.25px #111">#3202</div><div class="t" style="left:317px;top:364.2px;font-size:12px;font-weight:400;color:#222;-webkit-text-stroke:0.25px #222">Samantha Green</div><div class="t" style="left:434px;top:364.2px;font-size:12px;font-weight:400;color:#222;-webkit-text-stroke:0.25px #222">Shop</div><div class="t" style="left:503px;top:356.2px;font-size:12px;font-weight:400;color:#222;-webkit-text-stroke:0.25px #222">June 5,</div><div class="t" style="left:503px;top:372.2px;font-size:12px;font-weight:400;color:#222;-webkit-text-stroke:0.25px #222">2021</div><div class="t" style="right:182px;top:364px;font-size:12px;color:#111">$89.99</div><div class="t" style="left:643px;top:364.2px;font-size:12px;font-weight:400;color:#222;-webkit-text-stroke:0.25px #222">Paid</div><div class="a" style="left:735px;top:370px;width:16px;height:4px;background:#111;border-radius:2px"></div><div class="a" style="left:259px;top:400.5px;width:518px;height:1px;background:#ececec"></div><div class="t" style="left:259px;top:421.2px;font-size:12px;font-weight:700;color:#111;-webkit-text-stroke:0.25px #111">#3201</div><div class="t" style="left:317px;top:421.2px;font-size:12px;font-weight:400;color:#222;-webkit-text-stroke:0.25px #222">Adam Parker</div><div class="t" style="left:434px;top:413.2px;font-size:12px;font-weight:400;color:#222;-webkit-text-stroke:0.25px #222">Online</div><div class="t" style="left:434px;top:429.2px;font-size:12px;font-weight:400;color:#222;-webkit-text-stroke:0.25px #222">Store</div><div class="t" style="left:503px;top:413.2px;font-size:12px;font-weight:400;color:#222;-webkit-text-stroke:0.25px #222">May 20,</div><div class="t" style="left:503px;top:429.2px;font-size:12px;font-weight:400;color:#222;-webkit-text-stroke:0.25px #222">2021</div><div class="t" style="right:182px;top:421px;font-size:12px;color:#111">$19.99</div><div class="t" style="left:643px;top:421.2px;font-size:12px;font-weight:400;color:#222;-webkit-text-stroke:0.25px #222">Unfulfilled</div><div class="a" style="left:735px;top:427px;width:16px;height:4px;background:#111;border-radius:2px"></div></div></div>
<div class="a" style="left:850.00px;top:562.30px;width:200.00px;height:111.00px;border:1px solid #dcdcdc;border-radius:8px"></div>
<div class="a" style="left:854.60px;top:651.90px;width:25.80px;height:16.80px;background:#ececec;border-radius:4.5px"></div>
<div class="t" style="left:863.90px;top:655.08px;font-size:11.6px;color:#0a0a0a;font-weight:700;">C</div>
<div class="a" style="left:1060.00px;top:562.00px;width:201.70px;height:111.70px;background:#fff;border:1px dashed #c9c9c9;border-radius:9px"></div>
<svg class="a" style="left:1152.50px;top:596.80px;" width="17.5" height="17.5" viewBox="0 0 24 24" fill="none" stroke="#222" stroke-width="2" stroke-linecap="round" stroke-linejoin="round"><path d="M3 12a9 9 0 0 1 9-9 9.75 9.75 0 0 1 6.74 2.74L21 8"/><path d="M21 3v5h-5"/><path d="M21 12a9 9 0 0 1-9 9 9.75 9.75 0 0 1-6.74-2.74L3 16"/><path d="M8 16H3v5"/></svg>
<div class="t" style="left:1124.00px;top:624.87px;font-size:13.5px;color:#333;font-weight:500;letter-spacing:0.45px;">Regenerate</div>
<div class="a" style="left:380px;top:690px;width:700px;height:97.5px;overflow:hidden"><div class="a" style="left:54px;top:24px;width:560px;height:52.5px;border-radius:27px;box-shadow:0 10px 20px rgba(0,0,0,.5)"></div></div>
<div class="a" style="left:434.00px;top:714.00px;width:560.00px;height:52.50px;background:#050505;border-radius:27px"></div>
<svg class="a" style="left:442.8px;top:722.9px" width="36" height="36" viewBox="0 0 36 36"><defs><clipPath id="c4428"><circle cx="18" cy="18" r="18"/></clipPath></defs><g clip-path="url(#c4428)"><rect width="36" height="36" fill="#f3f3f3"/><path d="M4 37 L6 31.5 Q10 28 15 27.5 L21 27.5 Q28 24.5 35 23.5 L36 37Z" fill="#1b1614"/><path d="M12.5 24 L22 24 L21.5 29 Q17 31 13 29Z" fill="#a37560"/><ellipse cx="7.4" cy="18.5" rx="1.7" ry="2.8" fill="#b8826a"/><ellipse cx="27" cy="18.5" rx="1.7" ry="2.8" fill="#b8826a"/><ellipse cx="17.2" cy="15.8" rx="10" ry="12.8" fill="#c99780"/><path d="M7.2 16.5 Q6.5 0.3 17 0.6 Q27.5 0.3 27 16.5 Q26.5 8.5 24.8 7.2 Q17 5.6 9.5 7.2 Q7.7 8.5 7.2 16.5Z" fill="#3a2d27"/><path d="M10.6 13.8 Q12.8 12.6 15 13.6 M19.6 13.6 Q21.8 12.6 24 13.8" stroke="#5c4035" stroke-width="1.4" fill="none"/><path d="M8.6 19 Q9.5 28.4 17.2 28.6 Q25 28.4 25.8 19 Q24 25.5 17.2 25.8 Q10.4 25.5 8.6 19Z" fill="#8c6554" opacity=".75"/><path d="M14.2 22.4 Q17.2 21.6 20.2 22.4" stroke="#8a5a48" stroke-width="1" fill="none"/></g></svg>
<div class="a" style="left:488.00px;top:714.00px;width:1.00px;height:52.50px;background:#2a2a2a"></div>
<div class="t" style="left:497.20px;top:733.05px;font-size:16px;color:#7f7f86;letter-spacing:0.26px;">Make the text larger, or change colors.</div>
<svg class="a" style="left:906px;top:734px" width="18" height="16" viewBox="0 0 18 16" fill="none" stroke="#f2f2f2" stroke-width="1.7" stroke-linecap="round" stroke-linejoin="round"><path d="M16 1.2 V10 H2 M6.3 5.8 L1.6 10 L6.3 14.3"/></svg>
<div class="a" style="left:940.00px;top:714.00px;width:1.00px;height:52.50px;background:#2a2a2a"></div>
<div class="a" style="left:949.60px;top:723.00px;width:36.00px;height:36.00px;border:1px solid #2e2e2e;border-radius:50%"></div>
<svg class="a" style="left:957px;top:731.5px" width="20" height="18" viewBox="0 0 20 18" fill="none" stroke="#dcdcdc" stroke-width="1.5" stroke-linecap="round" stroke-linejoin="round"><path d="M7.2 6.8 L18.6 12.6 L13.2 13.6 L16.4 17 M13.2 13.6 L11.4 16.8 Z"/><path d="M7.2 6.8 L11.4 16.8"/><circle cx="3.4" cy="2.6" r="0.9" fill="#dcdcdc" stroke="none"/><circle cx="8.6" cy="1.6" r="0.9" fill="#dcdcdc" stroke="none"/><circle cx="2.3" cy="7.6" r="0.9" fill="#dcdcdc" stroke="none"/></svg>
<div class="t" style="left:1178.30px;top:782.99px;font-size:13px;color:#111;font-weight:700;letter-spacing:0.05px;">FAQ</div>
<div class="t" style="left:1215.30px;top:782.99px;font-size:13px;color:#111;font-weight:700;letter-spacing:0.05px;">Terms</div>
<div class="t" style="left:1265.00px;top:782.99px;font-size:13px;color:#111;font-weight:700;letter-spacing:0.05px;">AI Policy</div>
<div class="t" style="left:1331.60px;top:782.99px;font-size:13px;color:#111;font-weight:700;letter-spacing:0.05px;">Privacy</div>
<svg class="a" style="left:1394px;top:781.5px" width="20" height="17" viewBox="0 0 20 17"><path d="M10 0.5 L19.5 16.5 L0.5 16.5Z" fill="#000"/></svg>
</body></html>
